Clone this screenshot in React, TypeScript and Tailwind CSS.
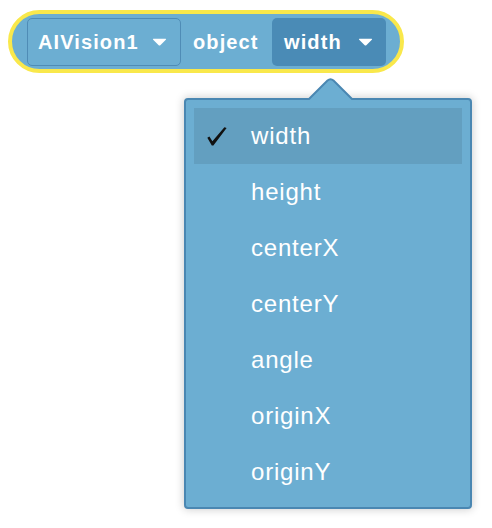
import React from "react";

const items = ["width", "height", "centerX", "centerY", "angle", "originX", "originY"];

function Caret() {
  return (
    <svg width="15" height="8" viewBox="0 0 15 8" className="shrink-0">
      <path d="M1.5 0.8 H13.5 Q14.6 0.8 13.8 1.7 L8.3 7.2 Q7.5 8 6.7 7.2 L1.2 1.7 Q0.4 0.8 1.5 0.8 Z" fill="#ffffff" />
    </svg>
  );
}

function Check() {
  return (
    <svg width="20" height="19" viewBox="0 0 20 19" className="shrink-0">
      <path d="M0.3 10.8 L2.4 9.6 L5.4 14.2 L17.4 0.3 L19.6 0.9 L6.4 18.4 L4.8 18.4 Z" fill="#111111" />
    </svg>
  );
}

export default function App() {
  return (
    <div
      className="relative w-[492px] h-[528px] bg-white overflow-hidden"
      style={{ fontFamily: '"Liberation Sans", Arial, Helvetica, sans-serif' }}
    >
      <div className="pt-[10px] pl-[8px]">
        <div className="w-[396px] h-[63px] rounded-full border-4 border-[#f9e84b] bg-[#6caed2] flex items-start pt-[4px] pl-[15px] text-white font-bold text-[20px] tracking-[1.1px]">
          <div className="w-[154px] h-[48px] rounded-[5px] border border-[#4f8cb6] bg-[#6caed2] flex items-center pl-[10px] pr-[13px] justify-between">
            <span>AIVision1</span>
            <Caret />
          </div>
          <div className="h-[48px] flex items-center ml-[12px] w-[79px]">object</div>
          <div className="w-[114px] h-[48px] rounded-[5px] bg-[#4a8bb6] flex items-center pl-[12px] pr-[13px] justify-between">
            <span>width</span>
            <Caret />
          </div>
        </div>
      </div>

      <div className="absolute left-[184px] top-[98px] w-[288px] h-[411px] rounded-[4px] border-2 border-[#4a87b2] bg-[#6caed2] shadow-[0_0_8px_1px_rgba(0,0,0,0.18)] pt-[8px] px-[8px]">
        <svg
          width="48"
          height="24"
          viewBox="0 0 48 24"
          className="absolute left-[121px] top-[-22px]"
        >
          <path d="M1 22 L20.5 2.6 Q23.5 0 26.5 2.6 L46 22" fill="#6caed2" stroke="#4a87b2" strokeWidth="2" />
          <rect x="0" y="22" width="48" height="3" fill="#6caed2" />
        </svg>
        <div className="flex flex-col">
          {items.map((it, i) => (
            <div
              key={it}
              className={
                "h-[56px] flex items-center text-white text-[24px] tracking-[0.8px] " +
                (i === 0 ? "bg-[#639fc0]" : "")
              }
            >
              <div className="w-[57px] pl-[13px] flex items-center">{i === 0 ? <Check /> : null}</div>
              <span>{it}</span>
            </div>
          ))}
        </div>
      </div>
    </div>
  );
}
